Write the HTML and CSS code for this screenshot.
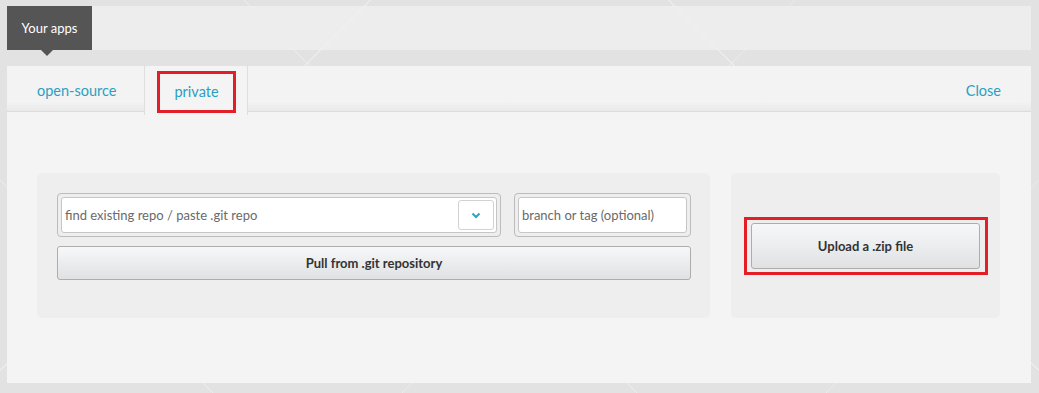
FILE: index.html
```html
<!DOCTYPE html>
<html lang="en">
<head>
<meta charset="utf-8">
<title>Your apps</title>
<link rel="stylesheet" href="styles.css">
</head>
<body>
<div class="page">
  <header class="topbar">
    <div class="apps-tab">Your apps</div>
  </header>
  <section class="panel">
    <nav class="tabbar">
      <a class="tab">open-source</a>
      <a class="tab tab-active"><span class="mark mark-tab">private</span></a>
      <div class="tab-fill"><a class="close">Close</a></div>
    </nav>
    <div class="content">
      <div class="box box-git">
        <div class="row">
          <div class="field field-repo">
            <div class="input">
              <span class="placeholder">find existing repo / paste .git repo</span>
              <span class="drop">
                <svg width="10" height="7" viewBox="0 0 10 7"><path d="M1.5 1.5 L5 5 L8.5 1.5" fill="none" stroke="#2aa3c4" stroke-width="2"/></svg>
              </span>
            </div>
          </div>
          <div class="field field-branch">
            <div class="input">
              <span class="placeholder">branch or tag (optional)</span>
            </div>
          </div>
        </div>
        <button class="btn btn-pull">Pull from .git repository</button>
      </div>
      <div class="box box-zip">
        <div class="mark mark-upload">
          <button class="btn btn-upload">Upload a .zip file</button>
        </div>
      </div>
    </div>
  </section>
</div>
</body>
</html>
```
FILE: styles.css
```css
html, body {
  margin: 0;
  padding: 0;
}
body {
  width: 1039px;
  height: 393px;
  overflow: hidden;
  font-family: Lato, "Open Sans", "Liberation Sans", sans-serif;
  background-color: #e2e2e2;
  background-image:
    repeating-linear-gradient(45deg, transparent 0 150px, rgba(255,255,255,0.35) 150px 151px, transparent 151px 300px),
    repeating-linear-gradient(-45deg, transparent 0 150px, rgba(255,255,255,0.35) 150px 151px, transparent 151px 300px);
}
.page {
  padding: 6px 8px 0 7px;
}
.topbar {
  height: 44px;
  background: rgba(240,240,240,0.75);
  display: flex;
}
.apps-tab {
  position: relative;
  width: 85px;
  background: #555555;
  color: #ffffff;
  font-size: 13px;
  line-height: 44px;
  text-align: center;
}
.apps-tab::after {
  content: "";
  position: absolute;
  left: 34px;
  bottom: -6px;
  border-left: 6px solid transparent;
  border-right: 6px solid transparent;
  border-top: 6px solid #555555;
}
.panel {
  margin-top: 16px;
  height: 317px;
  background: #f4f4f4;
}
.tabbar {
  display: flex;
  height: 49px;
}
.tab {
  box-sizing: border-box;
  height: 49px;
  border-right: 1px solid #dedede;
  color: #2b9fc1;
  font-size: 14.5px;
  font-weight: 400;
  cursor: pointer;
}
.tab:first-child {
  width: 138px;
  padding-top: 16px;
  padding-left: 30px;
  background: linear-gradient(#f3f3f3 0, #f3f3f3 36px, #e8e8e8 46px, #f3f3f3 46px);
  box-shadow: inset 0 -3px 0 #f4f4f4, inset 0 -4px 0 #dcdcdc;
}
.tab-active {
  width: 103px;
  padding: 5px 0 0 12px;
  background: #f4f4f4;
}
.mark {
  box-sizing: border-box;
  border: 3px solid #e41e26;
}
.mark-tab {
  display: flex;
  align-items: center;
  justify-content: center;
  width: 79px;
  height: 42px;
  padding-bottom: 2px;
}
.tab-fill {
  flex: 1;
  display: flex;
  justify-content: flex-end;
  padding: 16px 30px 0 0;
  background: linear-gradient(#f3f3f3 0, #f3f3f3 36px, #e8e8e8 46px, #f3f3f3 46px);
  box-shadow: inset 0 -3px 0 #f4f4f4, inset 0 -4px 0 #dcdcdc;
}
.close {
  color: #2b9fc1;
  font-size: 14.5px;
  font-weight: 400;
  cursor: pointer;
}
.content {
  display: flex;
  gap: 21px;
  padding: 58px 31px 0 30px;
}
.box {
  box-sizing: border-box;
  height: 145px;
  background: #eeeeee;
  border-radius: 5px;
}
.box-git {
  width: 673px;
  padding: 20px 19px 0 20px;
}
.row {
  display: flex;
  gap: 13px;
}
.field {
  box-sizing: border-box;
  height: 44px;
  padding: 3px;
  border: 1px solid #bcbcbc;
  border-radius: 4px;
  background: #eeeeee;
}
.field-repo { width: 444px; }
.field-branch { width: 177px; }
.input {
  box-sizing: border-box;
  height: 36px;
  display: flex;
  align-items: center;
  justify-content: space-between;
  padding: 0 2px 0 3px;
  background: #ffffff;
  border: 1px solid #c6c6c6;
  border-radius: 3px;
}
.placeholder {
  color: #6a6a6a;
  font-size: 13px;
}
.drop {
  box-sizing: border-box;
  width: 36px;
  height: 30px;
  display: flex;
  align-items: center;
  justify-content: center;
  border: 1px solid #d2d2d2;
  border-radius: 3px;
  background: #ffffff;
}
.btn {
  box-sizing: border-box;
  display: block;
  border: 1px solid #adadad;
  border-radius: 3px;
  background: linear-gradient(#f6f8f9, #dfe1e3);
  color: #333333;
  font-family: Lato, "Open Sans", "Liberation Sans", sans-serif;
  font-size: 13px;
  font-weight: 700;
  cursor: pointer;
}
.btn-pull {
  margin-top: 9px;
  width: 634px;
  height: 34px;
}
.box-zip {
  width: 269px;
  display: flex;
  align-items: center;
  padding: 0 12px 0 13px;
}
.mark-upload {
  width: 244px;
  height: 58px;
  padding: 3px 5px 3px 4px;
}
.btn-upload {
  width: 229px;
  height: 46px;
}
```
